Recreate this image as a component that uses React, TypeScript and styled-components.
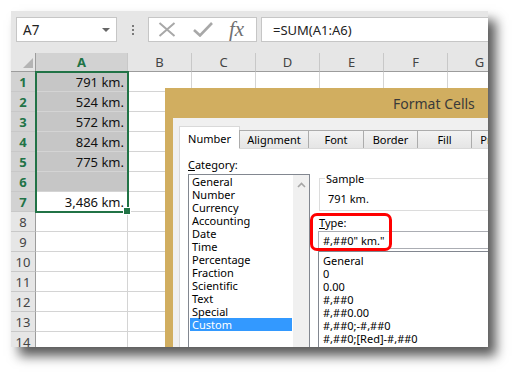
import React from 'react';
import styled, { createGlobalStyle } from 'styled-components';

const GlobalStyle = createGlobalStyle`
  html, body {
    margin: 0;
    padding: 0;
    background: #fff;
  }
  body {
    font-family: 'Noto Sans', 'Segoe UI', sans-serif;
    color: #000;
  }
`;

const GREEN = '#217346';
const GOLD = '#d1ae60';

const Page = styled.div`
  width: 518px;
  height: 379px;
  padding: 11px 0 0 11px;
  box-sizing: border-box;
  overflow: hidden;
`;

const Shot = styled.div`
  position: relative;
  width: 477px;
  height: 336px;
  overflow: hidden;
  background: #e6e6e6;
  box-shadow: 8px 9px 11px rgba(0, 0, 0, 0.65);
`;

/* formula bar */
const FormulaBar = styled.div`
  height: 42px;
  box-sizing: border-box;
  display: flex;
  align-items: flex-start;
  padding: 6px 0 0 5px;
`;

const NameBox = styled.div`
  width: 101px;
  height: 25px;
  flex: none;
  box-sizing: border-box;
  background: #fff;
  border: 1px solid #c6c6c6;
  display: flex;
  align-items: center;
  justify-content: space-between;
  padding: 0 6px;
  font-size: 13.5px;
  color: #222;
`;

const Caret = styled.span`
  width: 0;
  height: 0;
  border-left: 4px solid transparent;
  border-right: 4px solid transparent;
  border-top: 4px solid #666;
`;

const Grip = styled.div`
  width: 31px;
  height: 25px;
  flex: none;
  display: flex;
  flex-direction: column;
  align-items: center;
  justify-content: center;
  gap: 2px;

  & > i {
    width: 2px;
    height: 2px;
    background: #7a7a7a;
  }
`;

const IconBox = styled.div`
  width: 109px;
  height: 25px;
  flex: none;
  box-sizing: border-box;
  background: #fff;
  border: 1px solid #c6c6c6;
  display: flex;
  align-items: center;
  padding-left: 9px;
  gap: 17px;
`;

const Fx = styled.span`
  font-family: 'Liberation Serif', 'DejaVu Serif', serif;
  font-style: italic;
  font-size: 21px;
  line-height: 1;
  color: #707070;
  margin-left: -1px;
`;

const FormulaInput = styled.div`
  flex: 1;
  height: 25px;
  margin-left: 4px;
  box-sizing: border-box;
  background: #fff;
  border: 1px solid #c6c6c6;
  border-right: none;
  display: flex;
  align-items: center;
  padding-left: 11px;
  font-size: 13px;
  color: #222;
`;

/* sheet */
const Sheet = styled.div`
  position: relative;
`;

const HeaderRow = styled.div`
  display: flex;
  height: 19px;
`;

const Row = styled.div`
  display: flex;
  height: 20px;
`;

const Corner = styled.div`
  width: 25px;
  flex: none;
  box-sizing: border-box;
  border-right: 1px solid #9c9c9c;
  border-bottom: 1px solid #9c9c9c;
  display: flex;
  align-items: flex-end;
  justify-content: flex-end;
  padding: 0 2px 3px 0;
`;

const ColHead = styled.div<{ $w: number; $sel?: boolean }>`
  width: ${(p) => p.$w}px;
  flex: none;
  box-sizing: border-box;
  border-right: 1px solid #c8c8c8;
  border-bottom: 1px solid #9c9c9c;
  background: ${(p) => (p.$sel ? '#d2d2d2' : '#e6e6e6')};
  color: ${(p) => (p.$sel ? GREEN : '#444')};
  font-weight: ${(p) => (p.$sel ? 700 : 400)};
  font-size: 13px;
  display: flex;
  align-items: center;
  justify-content: center;
`;

const RowHead = styled.div<{ $sel?: boolean }>`
  width: 25px;
  flex: none;
  box-sizing: border-box;
  border-right: 1px solid #9c9c9c;
  border-bottom: 1px solid #c8c8c8;
  background: ${(p) => (p.$sel ? '#d2d2d2' : '#e6e6e6')};
  color: ${(p) => (p.$sel ? GREEN : '#444')};
  font-weight: ${(p) => (p.$sel ? 700 : 400)};
  font-size: 13px;
  display: flex;
  align-items: center;
  justify-content: center;
`;

const Cell = styled.div<{ $w: number; $fill?: boolean }>`
  width: ${(p) => p.$w}px;
  flex: none;
  box-sizing: border-box;
  border-right: 1px solid #d4d4d4;
  border-bottom: 1px solid #d4d4d4;
  background: ${(p) => (p.$fill ? '#c6c6c6' : '#fff')};
  font-size: 13px;
  color: #111;
  display: flex;
  align-items: center;
  justify-content: flex-end;
  padding-right: 3px;
`;

const Selection = styled.div`
  position: absolute;
  left: 24px;
  top: 18px;
  width: 94px;
  height: 142px;
  box-sizing: border-box;
  border: 2px solid ${GREEN};
  pointer-events: none;
`;

const FillHandle = styled.div`
  position: absolute;
  right: -4px;
  bottom: -4px;
  width: 6px;
  height: 6px;
  background: ${GREEN};
  border: 1px solid #fff;
`;

/* dialog */
const Dialog = styled.div`
  position: absolute;
  left: 154px;
  top: 77px;
  width: 420px;
  height: 290px;
  display: flex;
  flex-direction: column;
  background: ${GOLD};
`;

const TitleBar = styled.div`
  height: 30px;
  flex: none;
  display: flex;
  align-items: center;
  padding-left: 228px;
  font-size: 14px;
  color: #3a3a3a;
`;

const Client = styled.div`
  flex: 1;
  margin-left: 8px;
  background: #f0f0f0;
  padding: 8px 0 0 6px;
  display: flex;
  flex-direction: column;
`;

const TabStrip = styled.div`
  display: flex;
  align-items: flex-end;
  height: 22px;
  position: relative;
  z-index: 1;
`;

const Tab = styled.div<{ $w: number; $active?: boolean }>`
  width: ${(p) => p.$w}px;
  flex: none;
  box-sizing: border-box;
  height: ${(p) => (p.$active ? 23 : 18)}px;
  margin-bottom: ${(p) => (p.$active ? -1 : 0)}px;
  border: 1px solid ${(p) => (p.$active ? '#d9d9d9' : '#acacac')};
  border-bottom: none;
  background: ${(p) => (p.$active ? '#fff' : 'linear-gradient(#f3f3f3, #e5e5e5)')};
  display: flex;
  align-items: center;
  justify-content: center;
  font-size: 11px;
  white-space: nowrap;

  & + & {
    margin-left: -1px;
  }
`;

const Panel = styled.div`
  flex: 1;
  background: #fff;
  border: 1px solid #d9d9d9;
  border-right: none;
  display: grid;
  grid-template-columns: 122px 1fr;
  column-gap: 8px;
  align-content: start;
  padding: 9px 0 0 8px;
  font-size: 11px;
`;

const Column = styled.div`
  display: flex;
  flex-direction: column;
  min-width: 0;
`;

const Label = styled.div`
  height: 14px;
  line-height: 14px;
  white-space: nowrap;

  & u {
    text-underline-offset: 1px;
  }
`;

const ListBox = styled.div`
  margin-top: 2px;
  height: 200px;
  box-sizing: border-box;
  border: 1px solid #828790;
  display: flex;
`;

const Items = styled.div`
  flex: 1;
  padding: 0 1px;
`;

const Item = styled.div<{ $sel?: boolean }>`
  height: 13px;
  line-height: 13px;
  padding-left: 2px;
  white-space: nowrap;
  background: ${(p) => (p.$sel ? '#3399ff' : 'transparent')};
  color: ${(p) => (p.$sel ? '#fff' : '#000')};
`;

const ScrollTrack = styled.div`
  width: 16px;
  flex: none;
  background: #f0f0f0;
  display: flex;
  justify-content: center;
  padding-top: 7px;
  box-sizing: border-box;
`;

const SampleGroup = styled.fieldset`
  margin: 14px 0 0 1px;
  padding: 7px 0 5px 8px;
  border: 1px solid #dcdcdc;
  border-right: none;
  min-width: 0;

  & legend {
    padding: 0 1px;
    margin-left: -3px;
    line-height: 13px;
  }
`;

const SampleText = styled.div`
  line-height: 13px;
`;

const TypeLabel = styled(Label)`
  margin-top: 5px;
  padding-left: 1px;
`;

const TypeInput = styled.div`
  margin-top: 1px;
  height: 18px;
  box-sizing: border-box;
  border: 1px solid #abadb3;
  border-right: none;
  display: flex;
  align-items: center;
  padding-left: 4px;
  white-space: nowrap;
`;

const FormatList = styled.div`
  margin-top: 2px;
  height: 120px;
  box-sizing: border-box;
  border: 1px solid #828790;
  border-right: none;
  padding: 2px 0 0 4px;

  & > div {
    height: 13px;
    line-height: 13px;
    white-space: nowrap;
  }
`;

const Callout = styled.div`
  position: absolute;
  left: 299px;
  top: 202px;
  width: 82px;
  height: 38px;
  box-sizing: border-box;
  border: 3px solid #ff0000;
  border-radius: 7px;
  pointer-events: none;
`;

const columns = [
  { name: 'A', w: 92 },
  { name: 'B', w: 64 },
  { name: 'C', w: 64 },
  { name: 'D', w: 64 },
  { name: 'E', w: 64 },
  { name: 'F', w: 64 },
  { name: 'G', w: 64 },
];

const values = ['791 km.', '524 km.', '572 km.', '824 km.', '775 km.', '', '3,486 km.'];

const categories = [
  'General',
  'Number',
  'Currency',
  'Accounting',
  'Date',
  'Time',
  'Percentage',
  'Fraction',
  'Scientific',
  'Text',
  'Special',
  'Custom',
];

const formats = [
  'General',
  '0',
  '0.00',
  '#,##0',
  '#,##0.00',
  '#,##0;-#,##0',
  '#,##0;[Red]-#,##0',
  '#,##0.00;-#,##0.00',
];

const tabs = [
  { label: 'Number', w: 61 },
  { label: 'Alignment', w: 70 },
  { label: 'Font', w: 56 },
  { label: 'Border', w: 55 },
  { label: 'Fill', w: 55 },
  { label: 'Protection', w: 72 },
];

const App: React.FC = () => {
  const rows = Array.from({ length: 14 }, (_, i) => i + 1);

  return (
    <>
      <GlobalStyle />
      <Page>
        <Shot>
          <FormulaBar>
            <NameBox>
              <span>A7</span>
              <Caret />
            </NameBox>
            <Grip>
              <i />
              <i />
              <i />
            </Grip>
            <IconBox>
              <svg width="18" height="15" viewBox="0 0 18 15">
                <path d="M1.5 1 L16.5 14 M16.5 1 L1.5 14" stroke="#a8a8a8" strokeWidth="2" fill="none" />
              </svg>
              <svg width="20" height="15" viewBox="0 0 20 15">
                <path d="M1 8 L7 13.5 L19 1" stroke="#a8a8a8" strokeWidth="2.6" fill="none" />
              </svg>
              <Fx>fx</Fx>
            </IconBox>
            <FormulaInput>=SUM(A1:A6)</FormulaInput>
          </FormulaBar>

          <Sheet>
            <HeaderRow>
              <Corner>
                <svg width="10" height="10" viewBox="0 0 10 10">
                  <polygon points="10,0 10,10 0,10" fill="#b4b4b4" />
                </svg>
              </Corner>
              {columns.map((c) => (
                <ColHead key={c.name} $w={c.w} $sel={c.name === 'A'}>
                  {c.name}
                </ColHead>
              ))}
            </HeaderRow>
            {rows.map((r) => (
              <Row key={r}>
                <RowHead $sel={r <= 7}>{r}</RowHead>
                {columns.map((c) => (
                  <Cell key={c.name} $w={c.w} $fill={c.name === 'A' && r <= 6}>
                    {c.name === 'A' && r <= 7 ? values[r - 1] : ''}
                  </Cell>
                ))}
              </Row>
            ))}
            <Selection>
              <FillHandle />
            </Selection>
          </Sheet>

          <Dialog>
            <TitleBar>Format Cells</TitleBar>
            <Client>
              <TabStrip>
                {tabs.map((t, i) => (
                  <Tab key={t.label} $w={t.w} $active={i === 0}>
                    {t.label}
                  </Tab>
                ))}
              </TabStrip>
              <Panel>
                <Column>
                  <Label>
                    <u>C</u>ategory:
                  </Label>
                  <ListBox>
                    <Items>
                      {categories.map((c) => (
                        <Item key={c} $sel={c === 'Custom'}>
                          {c}
                        </Item>
                      ))}
                    </Items>
                    <ScrollTrack>
                      <svg width="9" height="6" viewBox="0 0 9 6">
                        <path d="M1 5 L4.5 1.5 L8 5" stroke="#a6a6a6" strokeWidth="1.6" fill="none" />
                      </svg>
                    </ScrollTrack>
                  </ListBox>
                </Column>
                <Column>
                  <SampleGroup>
                    <legend>Sample</legend>
                    <SampleText>791 km.</SampleText>
                  </SampleGroup>
                  <TypeLabel>
                    <u>T</u>ype:
                  </TypeLabel>
                  <TypeInput>#,##0" km."</TypeInput>
                  <FormatList>
                    {formats.map((f) => (
                      <div key={f}>{f}</div>
                    ))}
                  </FormatList>
                </Column>
              </Panel>
            </Client>
          </Dialog>

          <Callout />
        </Shot>
      </Page>
    </>
  );
};

export default App;
